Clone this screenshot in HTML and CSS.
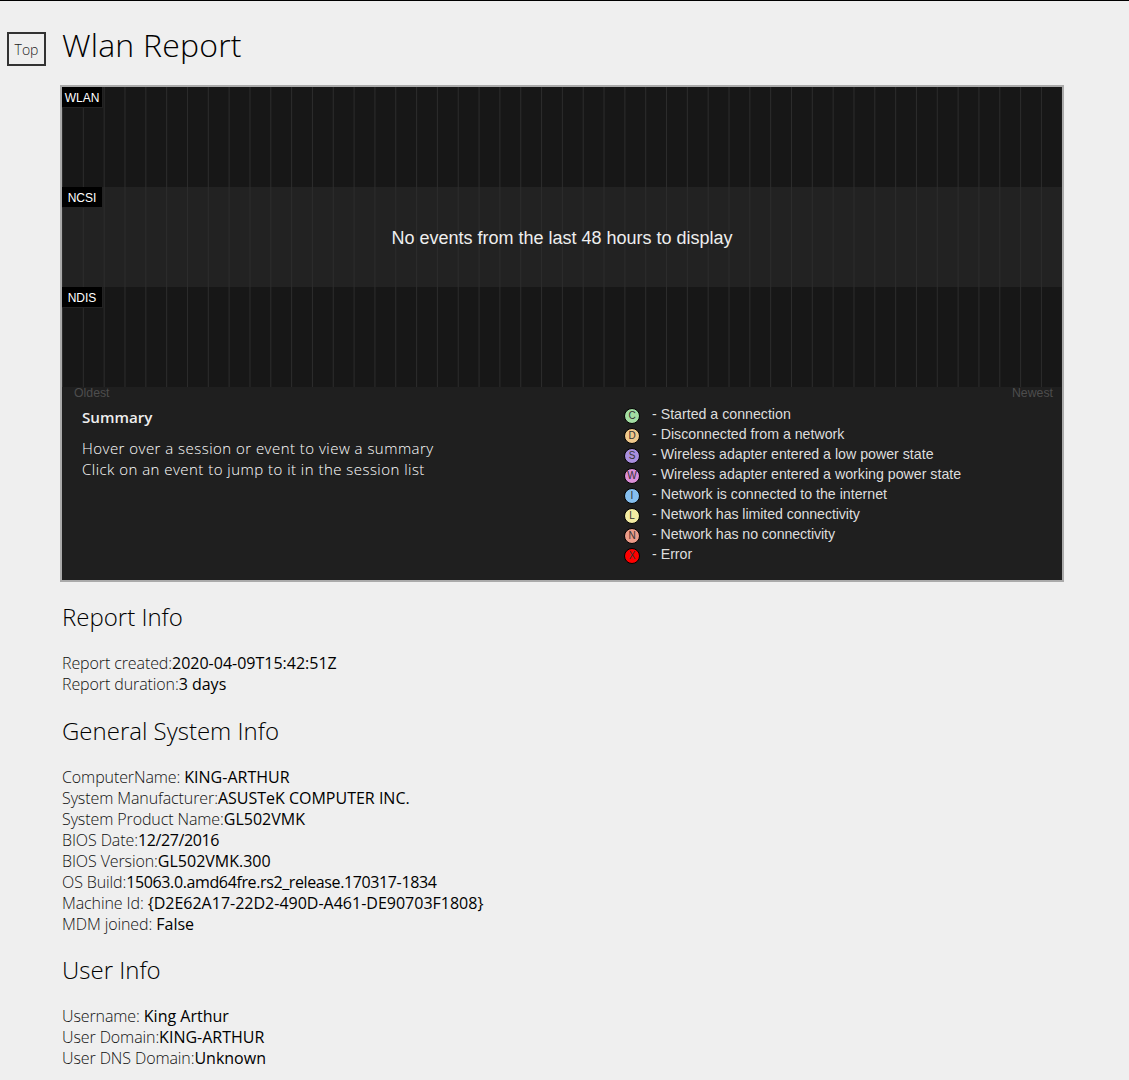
FILE: index.html
```html
<!DOCTYPE html>
<html lang="en">
<head>
<meta charset="utf-8">
<title>Wlan Report</title>
<link rel="stylesheet" href="styles.css">
</head>
<body>
<div class="page">
  <a class="top-link" href="#">Top</a>
  <main class="content">
    <h1 class="title">Wlan Report</h1>
    <section class="chart">
      <div class="timeline">
        <div class="lane lane-dark"><span class="lane-label">WLAN</span></div>
        <div class="lane lane-light"><span class="lane-label">NCSI</span></div>
        <div class="lane lane-dark"><span class="lane-label">NDIS</span></div>
        <div class="no-events">No events from the last 48 hours to display</div>
      </div>
      <div class="panel">
        <div class="axis"><span>Oldest</span><span>Newest</span></div>
        <div class="panel-body">
          <div class="summary">
            <h3 class="summary-title">Summary</h3>
            <p class="summary-text">Hover over a session or event to view a summary<br>Click on an event to jump to it in the session list</p>
          </div>
          <ul class="legend">
            <li class="legend-row"><span class="dot dot-c">C</span><span>- Started a connection</span></li>
            <li class="legend-row"><span class="dot dot-d">D</span><span>- Disconnected from a network</span></li>
            <li class="legend-row"><span class="dot dot-s">S</span><span>- Wireless adapter entered a low power state</span></li>
            <li class="legend-row"><span class="dot dot-w">W</span><span>- Wireless adapter entered a working power state</span></li>
            <li class="legend-row"><span class="dot dot-i">I</span><span>- Network is connected to the internet</span></li>
            <li class="legend-row"><span class="dot dot-l">L</span><span class="legend-tight">- Network has limited connectivity</span></li>
            <li class="legend-row"><span class="dot dot-n">N</span><span class="legend-tight">- Network has no connectivity</span></li>
            <li class="legend-row"><span class="dot dot-x">X</span><span>- Error</span></li>
          </ul>
        </div>
      </div>
    </section>

    <h2 class="heading">Report Info</h2>
    <div class="info">
      <div>Report created:<b>2020-04-09T15:42:51Z</b></div>
      <div>Report duration:<b>3 days</b></div>
    </div>

    <h2 class="heading">General System Info</h2>
    <div class="info">
      <div>ComputerName: <b>KING-ARTHUR</b></div>
      <div>System Manufacturer:<b>ASUSTeK COMPUTER INC.</b></div>
      <div>System Product Name:<b>GL502VMK</b></div>
      <div>BIOS Date:<b class="num">12/27/2016</b></div>
      <div>BIOS Version:<b>GL502VMK.300</b></div>
      <div>OS Build:<b class="num">15063.0.amd64fre.rs2_release.170317-1834</b></div>
      <div>Machine Id: <b>{D2E62A17-22D2-490D-A461-DE90703F1808}</b></div>
      <div>MDM joined: <b>False</b></div>
    </div>

    <h2 class="heading heading-tight">User Info</h2>
    <div class="info">
      <div>Username: <b>King Arthur</b></div>
      <div>User Domain:<b>KING-ARTHUR</b></div>
      <div>User DNS Domain:<b>Unknown</b></div>
    </div>
  </main>
</div>
</body>
</html>
```
FILE: styles.css
```css
* { box-sizing: border-box; }
html, body { margin: 0; height: 1080px; overflow: hidden; }
body {
  background: #efefef;
  color: #000;
  border-top: 1px solid #000;
  font-family: "Open Sans", "Noto Sans", sans-serif;
  font-weight: 300;
}
.page { display: flex; align-items: flex-start; padding: 0 0 0 7px; }
.top-link {
  flex: none;
  width: 39px;
  height: 34px;
  margin-top: 31px;
  border: 2px solid #333;
  color: #222;
  font-size: 14px;
  line-height: 32px;
  text-align: center;
  text-decoration: none;
}
.content { width: 1004px; margin-left: 14px; }
.title {
  margin: 22px 0 0 2px;
  height: 62px;
  font-size: 32px;
  letter-spacing: 0.2px;
  line-height: 44px;
  font-weight: 300;
}
.chart { border: 2px solid #aaa; background: #1f1f1f; height: 497px; width: 1004px; }
.timeline { position: relative; height: 300px; }
.lane {
  height: 100px;
  background-image: linear-gradient(90deg, transparent calc(100% - 1px), #2c2c2c calc(100% - 1px));
  background-size: 20.8333px 100%;
  background-position: 1px 0;
}
.lane-dark { background-color: #171717; }
.lane-light { background-color: #222; }
.lane-label {
  display: block;
  width: 41px;
  height: 21px;
  background: #000;
  border: 1px solid #222;
  border-width: 0 1px 1px 0;
  color: #fff;
  font: 12px/22px "Liberation Sans", Arial, sans-serif;
  text-align: center;
}
.no-events {
  position: absolute;
  left: 0;
  right: 0;
  top: 140px;
  color: #eee;
  font: 18px/22px "Liberation Sans", Arial, sans-serif;
  text-align: center;
}
.panel { height: 193px; }
.axis {
  display: flex;
  justify-content: space-between;
  padding: 0 9px 0 12px;
  color: #4d4d4d;
  font: 12.3px/13px "Liberation Sans", Arial, sans-serif;
}
.panel-body { display: flex; }
.summary { width: 562px; padding: 0 0 0 20px; color: #fff; }
.summary-title {
  margin: 7px 0 0;
  font-size: 15.2px;
  line-height: 20px;
  font-weight: 600;
  color: #eee;
}
.summary-text {
  margin: 11px 0 0;
  font-size: 15px;
  letter-spacing: 0.47px;
  line-height: 21px;
  font-weight: 300;
}
.legend {
  margin: 4px 0 0;
  padding: 0;
  list-style: none;
  color: #ddd;
  font: 14.2px/20px "Liberation Sans", Arial, sans-serif;
}
.legend-row { display: flex; align-items: flex-start; height: 20px; gap: 12px; }
.legend-tight { letter-spacing: -0.08px; }
.dot {
  flex: none;
  width: 16px;
  height: 16px;
  margin-top: 4px;
  border: 1px solid #000;
  border-radius: 50%;
  color: #333;
  font-size: 10px;
  line-height: 14px;
  text-align: center;
}
.dot-c { background: #a3dea3; }
.dot-d { background: #f0c98c; }
.dot-s { background: #a98fde; }
.dot-w { background: #dc8fd8; }
.dot-i { background: #85bfef; }
.dot-l { background: #f3eca3; }
.dot-n { background: #ec9c8a; }
.dot-x { background: #f00; }
.heading {
  margin: 17px 0 0 2px;
  font-size: 24px;
  line-height: 36px;
  font-weight: 300;
}
.info {
  margin: 18px 0 0 2px;
  font-size: 16px;
  line-height: 21px;
  letter-spacing: -0.1px;
  color: #111;
}
.info + .heading { margin-top: 18px; }
.info + .heading-tight { margin-top: 17px; }
.info b { font-weight: 400; color: #000; letter-spacing: 0; }
.info b.num { letter-spacing: -0.38px; }
```
